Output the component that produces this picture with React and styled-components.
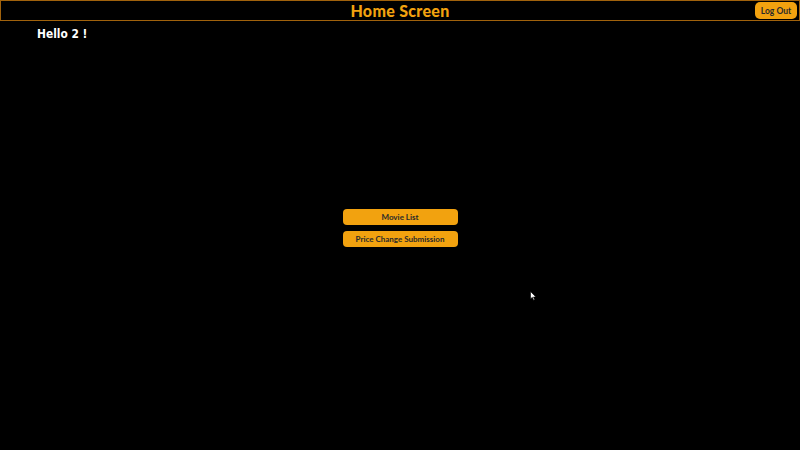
import React from "react";
import styled, { createGlobalStyle } from "styled-components";

const Global = createGlobalStyle`
  html, body { margin: 0; padding: 0; background: #000; }
  body { width: 800px; height: 450px; overflow: hidden; font-family: "Lato", "Liberation Sans", sans-serif; }
  #root { height: 450px; }
`;

const Page = styled.div`
  position: relative;
  width: 800px;
  height: 450px;
  background: #000;
  display: flex;
  flex-direction: column;
`;

const Header = styled.header`
  height: 19px;
  border: 1px solid #a0620c;
  display: flex;
  align-items: center;
  justify-content: center;
  position: relative;
`;

const Title = styled.h1`
  margin: 0;
  font-family: "Lato", "Liberation Sans", sans-serif;
  font-weight: 900;
  font-size: 16px;
  letter-spacing: 0.3px;
  color: #f2a20f;
  line-height: 19px;
`;

const LogOut = styled.button`
  position: absolute;
  right: 2px;
  top: 1px;
  height: 17px;
  width: 42px;
  padding: 0;
  border: none;
  border-radius: 5px;
  background: #f2a20f;
  color: #2a2a2a;
  font-family: "Lato", "Liberation Sans", sans-serif;
  font-weight: 700;
  font-size: 8.5px;
  cursor: pointer;
`;

const Greeting = styled.div`
  padding: 5px 0 0 37px;
  height: 15px;
  line-height: 15px;
  color: #fff;
  font-family: "DejaVu Sans", sans-serif;
  font-weight: 700;
  font-size: 13px;
`;

const GreetingText = styled.span`
  display: inline-block;
  transform: scaleX(0.82);
  transform-origin: left center;
`;

const Menu = styled.nav`
  margin-top: 168px;
  display: flex;
  flex-direction: column;
  align-items: center;
  gap: 6px;
`;

const MenuButton = styled.button`
  width: 115px;
  height: 16px;
  border: none;
  border-radius: 4px;
  background: #f2a20f;
  color: #2a2a2a;
  font-family: "Lato", "Liberation Sans", sans-serif;
  font-weight: 700;
  font-size: 8px;
  padding: 0;
  cursor: pointer;
`;

const Cursor = styled.svg`
  position: absolute;
  left: 530px;
  top: 291px;
`;

export default function App() {
  return (
    <Page>
      <Global />
      <Header>
        <Title>Home Screen</Title>
        <LogOut>Log Out</LogOut>
      </Header>
      <Greeting>
        <GreetingText>Hello 2 !</GreetingText>
      </Greeting>
      <Menu>
        <MenuButton>Movie List</MenuButton>
        <MenuButton>Price Change Submission</MenuButton>
      </Menu>
      <Cursor width="7" height="10" viewBox="0 0 7 10">
        <path d="M0.5 0.5 L0.5 8 L2.3 6.3 L3.6 9.2 L4.7 8.7 L3.5 6 L6 6 Z" fill="#fff" stroke="#000" strokeWidth="0.6" />
      </Cursor>
    </Page>
  );
}
